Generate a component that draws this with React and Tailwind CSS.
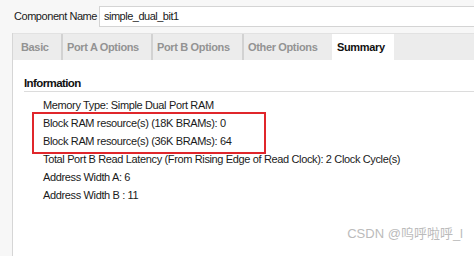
import React from "react";

const tabs = [
  { label: "Basic", w: "w-[48px]" },
  { label: "Port A Options", w: "w-[90px]" },
  { label: "Port B Options", w: "w-[91px]" },
  { label: "Other Options", w: "w-[88px]" },
];

const rows = [
  "Memory Type: Simple Dual Port RAM",
  "Block RAM resource(s) (18K BRAMs): 0",
  "Block RAM resource(s) (36K BRAMs): 64",
  "Total Port B Read Latency (From Rising Edge of Read Clock): 2 Clock Cycle(s)",
  "Address Width A: 6",
  "Address Width B : 11",
];

export default function App() {
  return (
    <div
      className="w-[474px] h-[256px] overflow-hidden bg-[#f7f7f7] relative"
      style={{ fontFamily: '"Liberation Sans", Arial, sans-serif' }}
    >
      {/* component name row */}
      <div className="flex items-center h-[33px] pl-[14px] pb-[1px]">
        <span className="whitespace-nowrap text-[11px] tracking-[-0.45px] text-[#1a1a1a] w-[85px]">
          Component Name
        </span>
        <div className="flex-1 h-[21px] bg-white border border-[#d4d4d4] border-r-0 flex items-center pl-[4px] text-[11px] tracking-[-0.5px] text-[#1a1a1a]">
          simple_dual_bit1
        </div>
      </div>

      {/* tab panel */}
      <div className="ml-[12px] border-l border-[#d6d6d6] bg-white h-[223px]">
        <div className="flex h-[27px] bg-[#ececec] border-t border-[#e2e2e2]">
          {tabs.map((t, i) => (
            <div
              key={t.label}
              className={`flex items-center whitespace-nowrap text-[11px] font-bold tracking-[-0.35px] text-[#939393] ${t.w} ${
                i > 0 ? "border-l-2 border-[#d2d2d2] pl-[4px]" : "pl-[8px]"
              }`}
            >
              {t.label}
            </div>
          ))}
          <div className="flex items-center ml-[2px] w-[62px] pl-[5px] bg-white text-[11px] font-bold tracking-[-0.35px] text-[#111]">
            Summary
          </div>
        </div>

        <div className="pl-[11px] pt-[16px]">
          <div className="text-[11.5px] font-bold tracking-[-0.6px] text-[#111] leading-[14px] pb-[1px] border-b border-[#dcdcdc]">
            Information
          </div>
          <div className="relative pl-[19px] pt-[4px] text-[11px] tracking-[-0.36px] text-[#1a1a1a] leading-[18px]">
            {rows.map((r) => (
              <div key={r} className="whitespace-nowrap">
                {r}
              </div>
            ))}
            <div className="absolute left-[8px] top-[20px] w-[234px] h-[42px] border-2 border-[#e0262b]" />
          </div>
        </div>
      </div>

      <div
        className="absolute right-[11px] top-[224px] text-[13px] text-[#bbbbbb]"
        style={{ fontFamily: '"Liberation Sans", "Noto Sans CJK SC", sans-serif' }}
      >
        CSDN @呜呼啦呼_l
      </div>
    </div>
  );
}
